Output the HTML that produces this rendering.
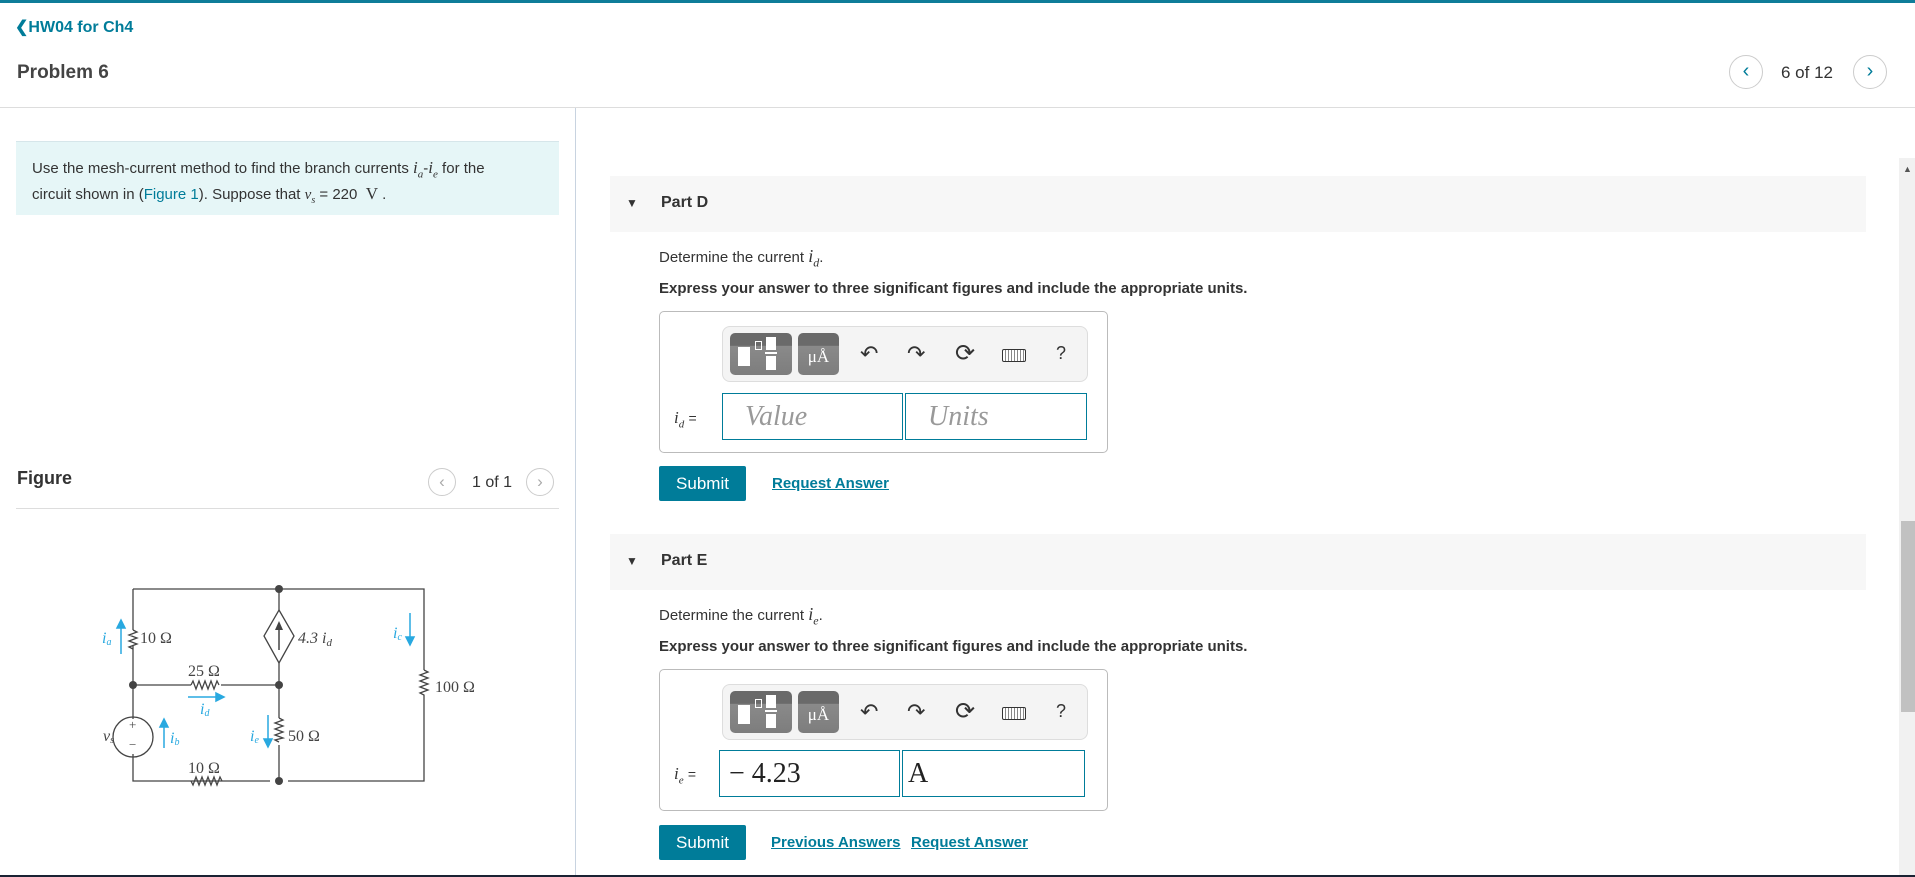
<!DOCTYPE html>
<html><head><meta charset="utf-8"><style>
*{margin:0;padding:0;box-sizing:border-box}
body{width:1915px;height:877px;position:relative;overflow:hidden;background:#fff;font-family:"Liberation Sans",Arial,sans-serif;color:#333}
.a{position:absolute}
.teal{color:#007c99}
.m{font-family:"Liberation Serif",serif;font-style:italic}
.circ{position:absolute;width:34px;height:34px;border:1px solid #ccc;border-radius:50%;color:#007c99;font-size:20px;text-align:center;line-height:31px}
.hdr{position:absolute;left:610px;width:1256px;height:56px;background:#f7f7f7}
.box{position:absolute;left:659px;width:449px;height:142px;border:1px solid #bbb;border-radius:5px}
.tb{position:absolute;left:62px;top:14px;width:366px;height:56px;background:#f4f4f4;border:1px solid #ddd;border-radius:8px}
.btn{position:absolute;top:6px;height:42px;border-radius:5px;background:linear-gradient(#6a6a6a 0,#6a6a6a 30%,#8a8a8a 31%,#7d7d7d);}
.inp{position:absolute;height:47px;border:1px solid #007c99;font-family:"Liberation Serif",serif;font-size:28px;line-height:45px}
.sub{position:absolute;left:659px;width:87px;height:35px;background:#007c99;border-radius:2px;color:#fff;font-size:17px;text-align:center;line-height:35px}
.lnk{position:absolute;color:#007c99;font-weight:bold;font-size:15px;text-decoration:underline}
.ic{position:absolute;top:14px;font-size:22px;color:#333}
</style></head><body>
<div class="a" style="left:0;top:0;width:1915px;height:3px;background:#0f7d99"></div>
<div class="a teal" style="left:15px;top:17px;font-size:16px;font-weight:bold">&#10094;HW04 for Ch4</div>
<div class="a" style="left:17px;top:62px;font-size:19px;font-weight:bold;color:#444">Problem 6</div>
<div class="circ" style="left:1729px;top:55px">&#8249;</div>
<div class="a" style="left:1781px;top:63px;font-size:17px">6 of 12</div>
<div class="circ" style="left:1853px;top:55px">&#8250;</div>
<div class="a" style="left:0;top:107px;width:1915px;height:1px;background:#ddd"></div>
<div class="a" style="left:575px;top:108px;width:1px;height:769px;background:#c8d3e0"></div>

<div class="a" style="left:16px;top:141px;width:543px;height:74px;background:#e6f6f7;border-top:1px solid #d6e6ea"></div>
<div class="a" style="left:32px;top:158px;font-size:15px;line-height:20px;color:#333;width:520px">Use the mesh-current method to find the branch currents <span class="m" style="font-size:17px">i<sub style="font-size:11px">a</sub></span>-<span class="m" style="font-size:17px">i<sub style="font-size:11px">e</sub></span> for the<br>circuit shown in (<span class="teal">Figure 1</span>). Suppose that <span class="m">v<sub style="font-size:10px">s</sub></span> = 220 &nbsp;<span style="font-family:'Liberation Serif',serif;font-size:17px">V</span> .</div>

<div class="a" style="left:17px;top:468px;font-size:18px;font-weight:bold;color:#333">Figure</div>
<div class="circ" style="left:428px;top:468px;width:28px;height:28px;line-height:25px;font-size:17px;color:#aaa">&#8249;</div>
<div class="a" style="left:472px;top:474px;font-size:16px">1 of 1</div>
<div class="circ" style="left:526px;top:468px;width:28px;height:28px;line-height:25px;font-size:17px;color:#aaa">&#8250;</div>
<div class="a" style="left:16px;top:508px;width:543px;height:1px;background:#ddd"></div>

<svg class="a" style="left:80px;top:580px" width="440" height="230" viewBox="80 580 440 230" font-family="Liberation Serif,serif">
<g stroke="#444" stroke-width="1.3" fill="none">
<path d="M133 589 H424 V670 M424 700 V781 H288 M270 781 H133 V754 M133 719 V685 V645 M133 630 V589"/>
<path d="M133 630 l4 2 -8 3 8 3 -8 3 8 3 -8 3 4 2"/>
<path d="M133 685 H191 M221 685 H279"/>
<path d="M191 685 l2 -4 3 8 3 -8 3 8 3 -8 3 8 3 -8 3 8 3 -8 2 4"/>
<path d="M191 781 l2 4 3 -8 3 8 3 -8 3 8 3 -8 3 8 3 -8 3 8 3 -8 2 4"/>
<path d="M424 670 l4 2 -8 3 8 3 -8 3 8 3 -8 3 8 3 -8 3 4 2 V700"/>
<path d="M279 589 V610 M279 663 V685 V718 M279 745 V781"/>
<path d="M279 718 l4 2 -8 3 8 3 -8 3 8 3 -8 3 8 3 -8 2 4 2"/>
<path d="M279 610 L294 636 L279 663 L264 636 Z"/>
<circle cx="133" cy="737" r="20"/>
</g>
<path d="M279 650 V625" stroke="#444" stroke-width="1.5"/><path d="M275 630 L279 621 L283 630Z" fill="#444"/>
<g fill="#444"><circle cx="279" cy="589" r="4"/><circle cx="133" cy="685" r="4"/><circle cx="279" cy="685" r="4"/><circle cx="279" cy="781" r="4"/></g>
<text x="129" y="729" font-size="13" fill="#444">+</text><text x="129" y="749" font-size="13" fill="#444">−</text>
<g fill="#444" font-size="16"><text x="140" y="643">10 Ω</text><text x="188" y="676">25 Ω</text><text x="188" y="773">10 Ω</text><text x="298" y="643" font-style="italic">4.3 i<tspan font-size="11" dy="3">d</tspan></text><text x="435" y="692">100 Ω</text><text x="288" y="741">50 Ω</text><text x="103" y="741" font-style="italic">v<tspan font-size="10" dy="2">s</tspan></text></g>
<g stroke="#29a9e0" stroke-width="1.5" fill="#29a9e0">
<path d="M121 654 V625" fill="none"/><path d="M117 628 L121 620 L125 628Z"/>
<path d="M164 748 V724" fill="none"/><path d="M160 727 L164 719 L168 727Z"/>
<path d="M188 697 H220" fill="none"/><path d="M216 693 L224 697 L216 701Z"/>
<path d="M410 613 V640" fill="none"/><path d="M406 637 L410 645 L414 637Z"/>
<path d="M268 715 V742" fill="none"/><path d="M264 739 L268 747 L272 739Z"/>
</g>
<g fill="#29a9e0" font-size="16" font-style="italic" stroke="none"><text x="102" y="643">i<tspan font-size="10" dy="2">a</tspan></text><text x="170" y="743">i<tspan font-size="10" dy="2">b</tspan></text><text x="393" y="638">i<tspan font-size="10" dy="2">c</tspan></text><text x="200" y="714">i<tspan font-size="10" dy="2">d</tspan></text><text x="250" y="741">i<tspan font-size="10" dy="2">e</tspan></text></g>
</svg>

<!-- Part D -->
<div class="hdr" style="top:176px"></div>
<div class="a" style="left:626px;top:196px;font-size:12px">&#9660;</div>
<div class="a" style="left:661px;top:194px;font-size:16px;font-weight:bold">Part D</div>
<div class="a" style="left:659px;top:246px;font-size:15px">Determine the current <span class="m" style="font-size:18px">i<sub style="font-size:12px">d</sub></span>.</div>
<div class="a" style="left:659px;top:280px;font-size:15px;font-weight:bold">Express your answer to three significant figures and include the appropriate units.</div>

<div class="box" style="top:311px">
<div class="tb">
<div class="btn" style="left:7px;width:62px"><div class="a" style="left:8px;top:14px;width:12px;height:19px;background:#fff"></div><div class="a" style="left:25px;top:8px;width:7px;height:9px;border:1px solid #fff"></div><div class="a" style="left:36px;top:4px;width:10px;height:13px;background:#fff"></div><div class="a" style="left:35px;top:19px;width:12px;height:2px;background:#fff"></div><div class="a" style="left:36px;top:23px;width:10px;height:14px;background:#fff"></div></div>
<div class="btn" style="left:75px;width:41px;color:#fff;font-family:'Liberation Serif',serif;font-size:17px;text-align:center;line-height:48px">μÅ</div>
<div class="ic" style="left:137px">&#8630;</div>
<div class="ic" style="left:184px">&#8631;</div>
<div class="ic" style="left:232px;font-size:24px;top:12px">&#10227;</div>
<div class="a" style="left:279px;top:22px;width:24px;height:13px;border:1.5px solid #333;border-radius:2px;background:repeating-linear-gradient(90deg,#fff 0 2px,#888 2px 3px)"></div>
<div class="ic" style="left:333px;font-size:18px;top:16px">?</div>
</div>
<div class="a m" style="left:14px;top:96px;font-size:17px">i<sub style="font-size:11px">d</sub> <span style="font-style:normal;font-family:'Liberation Sans';font-size:14px">=</span></div>
<div class="inp" style="left:62px;top:81px;width:181px;color:#999;font-style:italic;padding-left:22px">Value</div>
<div class="inp" style="left:245px;top:81px;width:182px;color:#999;font-style:italic;padding-left:22px">Units</div>
</div>
<div class="sub" style="top:466px">Submit</div>
<div class="lnk" style="left:772px;top:475px">Request Answer</div>

<!-- Part E -->
<div class="hdr" style="top:534px"></div>
<div class="a" style="left:626px;top:554px;font-size:12px">&#9660;</div>
<div class="a" style="left:661px;top:552px;font-size:16px;font-weight:bold">Part E</div>
<div class="a" style="left:659px;top:604px;font-size:15px">Determine the current <span class="m" style="font-size:18px">i<sub style="font-size:12px">e</sub></span>.</div>
<div class="a" style="left:659px;top:638px;font-size:15px;font-weight:bold">Express your answer to three significant figures and include the appropriate units.</div>

<div class="box" style="top:669px">
<div class="tb">
<div class="btn" style="left:7px;width:62px"><div class="a" style="left:8px;top:14px;width:12px;height:19px;background:#fff"></div><div class="a" style="left:25px;top:8px;width:7px;height:9px;border:1px solid #fff"></div><div class="a" style="left:36px;top:4px;width:10px;height:13px;background:#fff"></div><div class="a" style="left:35px;top:19px;width:12px;height:2px;background:#fff"></div><div class="a" style="left:36px;top:23px;width:10px;height:14px;background:#fff"></div></div>
<div class="btn" style="left:75px;width:41px;color:#fff;font-family:'Liberation Serif',serif;font-size:17px;text-align:center;line-height:48px">μÅ</div>
<div class="ic" style="left:137px">&#8630;</div>
<div class="ic" style="left:184px">&#8631;</div>
<div class="ic" style="left:232px;font-size:24px;top:12px">&#10227;</div>
<div class="a" style="left:279px;top:22px;width:24px;height:13px;border:1.5px solid #333;border-radius:2px;background:repeating-linear-gradient(90deg,#fff 0 2px,#888 2px 3px)"></div>
<div class="ic" style="left:333px;font-size:18px;top:16px">?</div>
</div>
<div class="a m" style="left:14px;top:94px;font-size:17px">i<sub style="font-size:11px">e</sub> <span style="font-style:normal;font-family:'Liberation Sans';font-size:14px">=</span></div>
<div class="inp" style="left:59px;top:80px;width:181px;color:#222;padding-left:9px">− 4.23</div>
<div class="inp" style="left:242px;top:80px;width:183px;color:#222;padding-left:5px">A</div>
</div>
<div class="sub" style="top:825px">Submit</div>
<div class="lnk" style="left:771px;top:834px">Previous Answers</div>
<div class="lnk" style="left:911px;top:834px">Request Answer</div>

<div class="a" style="left:1899px;top:158px;width:16px;height:719px;background:#f1f1f1"></div>
<div class="a" style="left:1903px;top:164px;font-size:9px;color:#555">&#9650;</div>
<div class="a" style="left:1901px;top:521px;width:14px;height:191px;background:#c1c1c1"></div>
<div class="a" style="left:0;top:875px;width:1915px;height:2px;background:#1a2233"></div>
</body></html>
